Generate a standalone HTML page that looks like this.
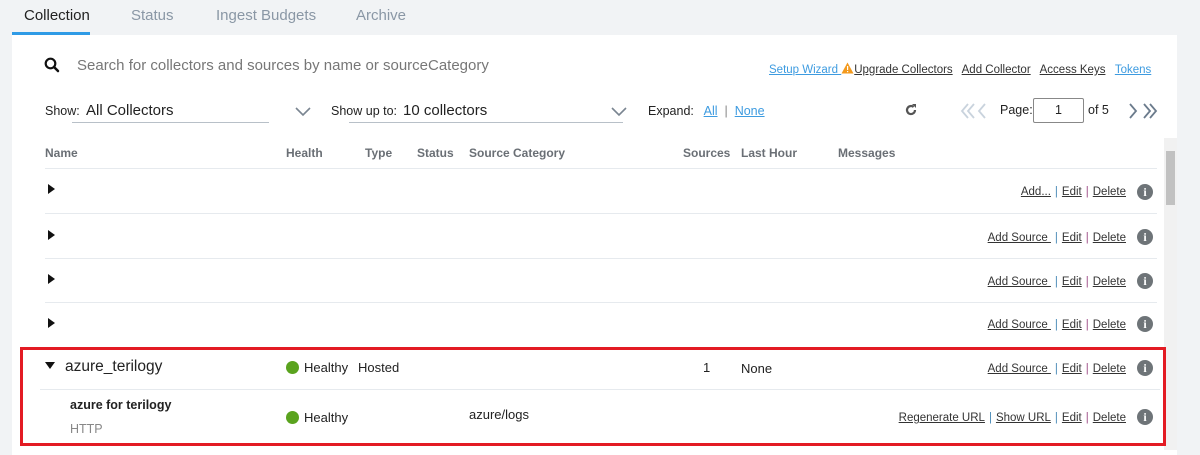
<!DOCTYPE html>
<html><head><meta charset="utf-8"><style>
*{margin:0;padding:0;box-sizing:border-box}
body{width:1200px;height:452px;background:#f1f3f5;font-family:"Liberation Sans",sans-serif;position:relative;overflow:hidden;color:#222}
.a{position:absolute;white-space:nowrap}
.tab{font-size:15px;color:#8a97a5;top:7px}
.card{position:absolute;left:12px;top:35px;width:1165px;height:420px;background:#fff}
.hd{font-size:12px;font-weight:bold;color:#6a6f75;top:146px}
.lk{font-size:11.5px;color:#333;text-decoration:underline}
.bl{color:#3d9be0}
.line{position:absolute;left:45px;width:1112px;height:1px;background:#e6eaee}
.tri{position:absolute;width:0;height:0;border-top:5px solid transparent;border-bottom:5px solid transparent;border-left:7px solid #111}
.info{position:absolute;width:16px;height:16px;border-radius:50%;background:#6e7478;color:#fff;font:bold 12px "Liberation Serif",serif;text-align:center;line-height:16px}
.dot{display:inline-block;width:13px;height:13px;border-radius:50%;background:#5aa31e;vertical-align:-2px;margin-right:5px}
.act{font-size:11.5px;color:#333;right:74px}
.act u{text-decoration:underline}
.act i{font-style:normal;color:#4a8bb8;margin:0 4px}
.act i.p{color:#a0508a}
</style></head><body>
<div class="a tab" style="left:24px;color:#222">Collection</div>
<div class="a" style="left:12px;top:32px;width:78px;height:3px;background:#2f9be6"></div>
<div class="a tab" style="left:131px">Status</div>
<div class="a tab" style="left:216px">Ingest Budgets</div>
<div class="a tab" style="left:356px">Archive</div>
<div class="card"></div>
<svg class="a" style="left:44px;top:57px" width="16" height="16" viewBox="0 0 16 16"><circle cx="6.5" cy="6.5" r="4.8" fill="none" stroke="#111" stroke-width="2.2"/><path d="M10 10l4 4" stroke="#111" stroke-width="2.5" stroke-linecap="round"/></svg>
<div class="a" style="left:77px;top:57px;font-size:15px;color:#777">Search for collectors and sources by name or sourceCategory</div>
<div class="a" style="left:769px;top:62px;font-size:11.5px"><span class="lk bl">Setup Wizard </span> <svg width="13" height="12" viewBox="0 0 13 12" style="vertical-align:-1px"><path d="M6.5 0.5L12.5 11.5H0.5Z" fill="#f39a1e"/><rect x="6" y="4" width="1.2" height="4" fill="#fff"/><rect x="6" y="9" width="1.2" height="1.2" fill="#fff"/></svg><span class="lk">Upgrade Collectors</span>&nbsp;&nbsp; <span class="lk">Add Collector</span>&nbsp;&nbsp; <span class="lk">Access Keys</span>&nbsp;&nbsp; <span class="lk bl">Tokens</span></div>
<div class="a" style="left:45px;top:104px;font-size:12.5px">Show:</div>
<div class="a" style="left:86px;top:102px;font-size:15px">All Collectors</div>
<div class="a" style="left:72px;top:122px;width:197px;height:1px;background:#b8c0c8"></div>
<svg class="a" style="left:295px;top:107px" width="16" height="10"><path d="M1 1l7 7 7-7" fill="none" stroke="#7a8591" stroke-width="1.6"/></svg>
<div class="a" style="left:331px;top:104px;font-size:12.5px">Show up to:</div>
<div class="a" style="left:403px;top:102px;font-size:15px">10 collectors</div>
<div class="a" style="left:349px;top:122px;width:274px;height:1px;background:#b8c0c8"></div>
<svg class="a" style="left:611px;top:107px" width="16" height="10"><path d="M1 1l7 7 7-7" fill="none" stroke="#7a8591" stroke-width="1.6"/></svg>
<div class="a" style="left:648px;top:104px;font-size:12.5px">Expand:&nbsp;&nbsp; <span class="lk bl" style="font-size:12.5px">All</span> <span style="color:#888">&nbsp;|&nbsp;</span> <span class="lk bl" style="font-size:12.5px">None</span></div>
<svg class="a" style="left:904px;top:103px" width="14" height="14" viewBox="0 0 14 14"><path d="M11 7a4 4 0 1 1-1.4-3" fill="none" stroke="#555" stroke-width="2.2"/><path d="M8 1h4v4z" fill="#555"/></svg>
<svg class="a" style="left:960px;top:103px" width="36" height="16"><path d="M8 1L2 8l6 7M14 1L8 8l6 7M25 1l-6 7 6 7" fill="none" stroke="#c9d3dd" stroke-width="1.8"/></svg>
<div class="a" style="left:1000px;top:103px;font-size:12.5px">Page:</div>
<div class="a" style="left:1033px;top:98px;width:51px;height:25px;border:1px solid #888;border-radius:2px;font-size:12.5px;text-align:center;line-height:23px">1</div>
<div class="a" style="left:1088px;top:103px;font-size:12.5px">of 5</div>
<svg class="a" style="left:1128px;top:103px" width="36" height="16"><path d="M2 1l6 7-6 7M16 1l6 7-6 7M22 1l6 7-6 7" fill="none" stroke="#6b7b8c" stroke-width="1.8"/></svg>
<div class="a hd" style="left:45px">Name</div>
<div class="a hd" style="left:286px">Health</div>
<div class="a hd" style="left:365px">Type</div>
<div class="a hd" style="left:417px">Status</div>
<div class="a hd" style="left:469px">Source Category</div>
<div class="a hd" style="left:683px">Sources</div>
<div class="a hd" style="left:741px">Last Hour</div>
<div class="a hd" style="left:838px">Messages</div>
<div class="a" style="left:1164px;top:138px;width:13px;height:312px;background:#f1f1f1"></div>
<div class="a" style="left:1166px;top:151px;width:9px;height:54px;background:#c1c1c1"></div>
<div class="line" style="top:168px"></div>
<div class="line" style="top:213px"></div>
<div class="line" style="top:258px"></div>
<div class="line" style="top:302px"></div>
<div class="tri" style="left:48px;top:184px"></div>
<div class="tri" style="left:48px;top:230px"></div>
<div class="tri" style="left:48px;top:274px"></div>
<div class="tri" style="left:48px;top:318px"></div>
<div class="a act" style="top:186px"><u>Add...</u><i>|</i><u>Edit</u><i class="p">|</i><u>Delete</u></div>
<div class="a act" style="top:232px"><u>Add Source </u><i>|</i><u>Edit</u><i class="p">|</i><u>Delete</u></div>
<div class="a act" style="top:276px"><u>Add Source </u><i>|</i><u>Edit</u><i class="p">|</i><u>Delete</u></div>
<div class="a act" style="top:319px"><u>Add Source </u><i>|</i><u>Edit</u><i class="p">|</i><u>Delete</u></div>
<div class="info" style="left:1137px;top:184px">i</div>
<div class="info" style="left:1137px;top:229px">i</div>
<div class="info" style="left:1137px;top:273px">i</div>
<div class="info" style="left:1137px;top:316px">i</div>
<div class="a" style="left:20px;top:347px;width:1146px;height:99px;border:3px solid #e31b23"></div>
<div class="line" style="top:389px;left:40px;width:1120px"></div>
<div class="a" style="left:45px;top:362px;width:0;height:0;border-left:5px solid transparent;border-right:5px solid transparent;border-top:7px solid #111"></div>
<div class="a" style="left:65px;top:358px;font-size:15.5px">azure_terilogy</div>
<div class="a" style="left:286px;top:360px;font-size:13px"><span class="dot"></span>Healthy</div>
<div class="a" style="left:358px;top:360px;font-size:13px">Hosted</div>
<div class="a" style="left:703px;top:360px;font-size:13px">1</div>
<div class="a" style="left:741px;top:361px;font-size:13px">None</div>
<div class="a act" style="top:363px"><u>Add Source </u><i>|</i><u>Edit</u><i class="p">|</i><u>Delete</u></div>
<div class="info" style="left:1137px;top:360px">i</div>
<div class="a" style="left:70px;top:398px;font-size:12.5px;font-weight:bold;color:#222">azure for terilogy</div>
<div class="a" style="left:70px;top:422px;font-size:12.5px;color:#888">HTTP</div>
<div class="a" style="left:286px;top:410px;font-size:13px"><span class="dot"></span>Healthy</div>
<div class="a" style="left:469px;top:407px;font-size:13px">azure/logs</div>
<div class="a act" style="top:412px"><u>Regenerate URL</u><i>|</i><u>Show URL</u><i>|</i><u>Edit</u><i class="p">|</i><u>Delete</u></div>
<div class="info" style="left:1137px;top:409px">i</div>
</body></html>
